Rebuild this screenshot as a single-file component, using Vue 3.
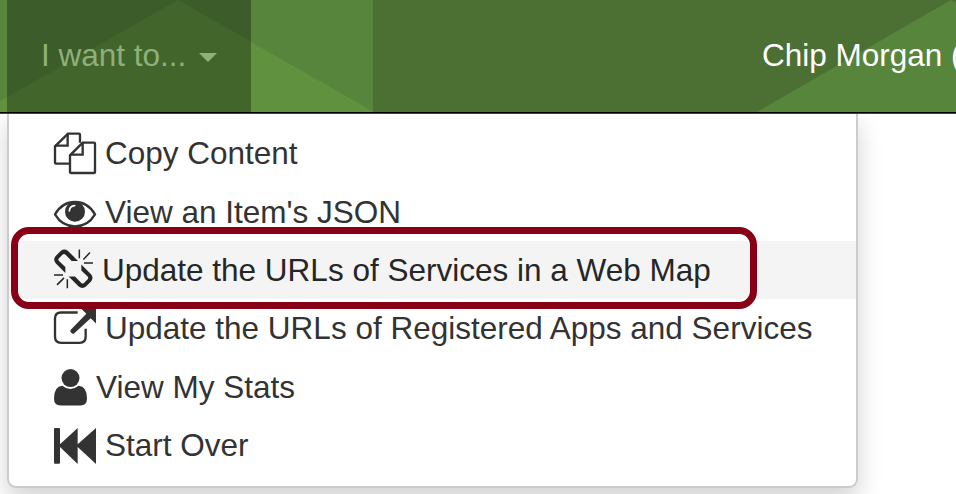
<script setup>
const items = [
  { label: 'Copy Content', icon: 'files', box: '162 13 126 175.2', width: 42 },
  { label: "View an Item's JSON", icon: 'eye', box: '162 188 126 175.2', width: 42 },
  { label: 'Update the URLs of Services in a Web Map', icon: 'unlink', box: '162 63.3 117 175.2', width: 39, active: true },
  { label: 'Update the URLs of Registered Apps and Services', icon: 'external', box: '162 238.5 126 175.2', width: 42 },
  { label: 'View My Stats', icon: 'user', box: '162 23.7 99 175.2', width: 33 },
  { label: 'Start Over', icon: 'rewind', box: '162 199 126 175.2', width: 42 },
]
</script>

<template>
  <div class="page">
    <header class="bar">
      <svg class="facets" viewBox="0 0 956 112" width="956" height="112" aria-hidden="true">
        <rect width="956" height="112" fill="#57853b" />
        <path d="M0 101 178 0 374 112H0z" fill="#5f913f" />
        <path d="M373 0H951L757 112H373z" fill="#4c7033" />
        <path d="M951 0H956V3z" fill="#4c7033" />
      </svg>
      <button class="toggle" type="button">
        <span>I want to...</span>
        <svg class="caret" viewBox="0 0 18 9" width="18" height="9"><path d="M0 0H18L9 9z" /></svg>
      </button>
      <div class="account">Chip Morgan (</div>
    </header>

    <ul class="menu">
      <li v-for="item in items" :key="item.label" class="item" :class="{ active: item.active }">
        <svg class="icon" :viewBox="item.box" :width="item.width" height="58.4" aria-hidden="true">
          <g v-if="item.icon === 'files'" class="line">
            <path d="M209 132H168q-3 0-3-3V80L204 42H237q3 0 3 3V69" />
            <path d="M165 78H203V42" />
            <path d="M248 69H282q3 0 3 3V156q0 4-4 4H214q-4 0-4-4V107z" />
            <path d="M211 105H248V69" />
          </g>
          <g v-else-if="item.icon === 'eye'">
            <path class="line" d="M165 282C179 258 200 245 225 245S271 258 285 282C271 306 250 318 225 318S179 306 165 282z" />
            <circle cx="225" cy="274" r="30" />
            <path class="glint" d="M208 272Q209 257 224 256" />
          </g>
          <g v-else-if="item.icon === 'unlink'">
            <path :transform="turn" v-for="turn in ['', 'rotate(180 220 146.5)']" :key="turn" d="M196 159 167 130Q158 119 167 108L182 93Q193 85 204 93L234 123H215L196 104Q192 101 188 104L177 115Q173 119 177 123L196 141z" />
            <path class="rays" d="M238 89V115M270 98 250 119M252 129H279M162 165H189M192 174 171 195M202 178V205" />
          </g>
          <g v-else-if="item.icon === 'external'">
            <path class="line" d="M233 279H183Q165 279 165 297V352Q165 370 183 370H239Q257 370 257 352V328" />
            <path d="M240 264H288V312L272 296 223 341Q219 345 213 339 208 334 213 330L259 283z" />
          </g>
          <g v-else-if="item.icon === 'user'">
            <circle cx="211.500" cy="84" r="27" />
            <path d="M187 107Q211 127 236 107Q261 109 261 145Q261 166 241 166H182Q162 166 162 145Q162 109 187 107z" />
          </g>
          <g v-else>
            <path d="M165 235H177Q180 235 180 238V284L233 235V284L288 235V343L233 292V343L180 292V339Q180 342 177 342H165Q162 342 162 339V238Q162 235 165 235z" />
          </g>
        </svg>
        <span class="label">{{ item.label }}</span>
      </li>
    </ul>
    <div class="callout"></div>
  </div>
</template>

<style>
body {
  margin: 0;
  overflow: hidden;
  background: #fff;
}
</style>

<style scoped>
.page {
  position: relative;
  width: 956px;
  height: 494px;
  overflow: hidden;
  font-family: "Liberation Sans", Arial, sans-serif;
  font-size: 31.5px;
  background: #fff;
}
.bar {
  position: relative;
  z-index: 2;
  box-sizing: border-box;
  display: flex;
  height: 114px;
  padding-left: 7px;
  border-bottom: 1px solid #49444b;
  box-shadow: inset 0 -1px #000;
  background: #000;
}
.facets {
  position: absolute;
  top: 0;
  left: 0;
}
.toggle {
  position: relative;
  display: flex;
  align-items: center;
  gap: 13px;
  width: 244px;
  height: 112px;
  padding: 0 0 1px 34px;
  border: 0;
  color: #8fb079;
  background: rgba(0, 0, 0, 0.3);
  font: inherit;
  white-space: nowrap;
}
.caret {
  margin-top: 3px;
  fill: currentColor;
}
.account {
  position: relative;
  width: 194px;
  margin-left: auto;
  line-height: 111px;
  color: #fff;
  white-space: nowrap;
}
.menu {
  box-sizing: border-box;
  width: 851px;
  margin: -2px 0 0 7px;
  padding: 12.3px 0 11px;
  border: 2px solid #ccc;
  border-top: 0;
  border-radius: 0 0 9px 9px;
  background: #fff;
  box-shadow: 0 12px 24px rgba(0, 0, 0, 0.175);
  list-style: none;
}
.item {
  display: flex;
  gap: 9px;
  height: 58.4px;
  padding-left: 45px;
  line-height: 59.4px;
  color: #333;
  white-space: nowrap;
}
.active {
  color: #262626;
  background: #f4f4f4;
}
.icon {
  flex: none;
  overflow: visible;
  fill: currentColor;
}
.line {
  fill: none;
  stroke: currentColor;
  stroke-width: 7;
}
.glint {
  fill: none;
  stroke: #fff;
  stroke-width: 5;
  stroke-linecap: round;
}
.rays {
  fill: none;
  stroke: currentColor;
  stroke-width: 4.5;
}
.callout {
  position: absolute;
  z-index: 3;
  top: 227px;
  left: 11px;
  box-sizing: border-box;
  width: 746px;
  height: 82px;
  border: 7px solid #870016;
  border-radius: 18px;
}
</style>
